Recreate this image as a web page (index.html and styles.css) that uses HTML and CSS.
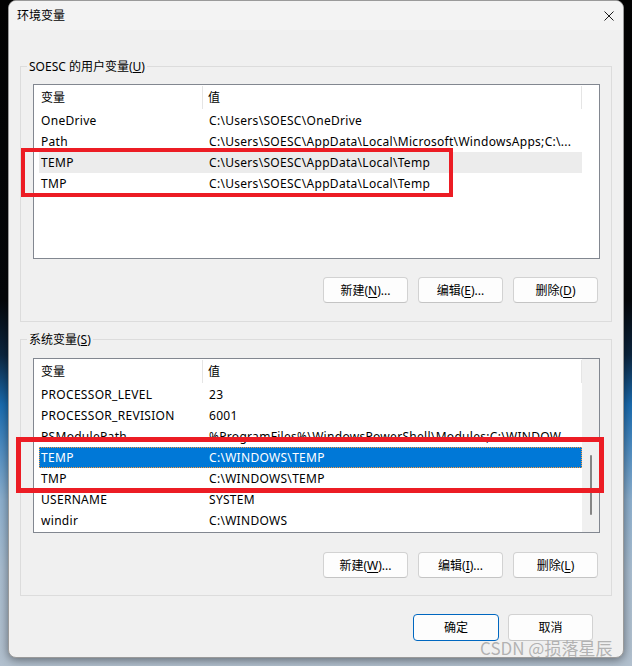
FILE: index.html
```html
<!DOCTYPE html>
<html lang="zh-CN">
<head>
<meta charset="utf-8">
<title>环境变量</title>
<link rel="stylesheet" href="styles.css">
</head>
<body>
<div class="window">
  <div class="titlebar">
    <span class="title">环境变量</span>
    <svg class="close" width="10" height="10" viewBox="0 0 10 10"><path d="M0.5 0.5L9.5 9.5M9.5 0.5L0.5 9.5" stroke="#1b1b1b" stroke-width="1"/></svg>
  </div>
  <div class="content">
    <fieldset class="group">
      <legend>SOESC 的用户变量(<u>U</u>)</legend>
      <div class="list">
        <div class="list-main">
          <div class="list-head"><div class="hcell c1">变量</div><div class="hcell c2">值</div></div>
          <div class="row"><span class="cell c1">OneDrive</span><span class="cell c2">C:\Users\SOESC\OneDrive</span></div>
          <div class="row"><span class="cell c1">Path</span><span class="cell c2">C:\Users\SOESC\AppData\Local\Microsoft\WindowsApps;C:\...</span></div>
          <div class="row hover"><span class="cell c1">TEMP</span><span class="cell c2">C:\Users\SOESC\AppData\Local\Temp</span></div>
          <div class="row"><span class="cell c1">TMP</span><span class="cell c2">C:\Users\SOESC\AppData\Local\Temp</span></div>
        </div>
      </div>
      <div class="buttons">
        <button class="btn">新建(<u>N</u>)...</button>
        <button class="btn">编辑(<u>E</u>)...</button>
        <button class="btn">删除(<u>D</u>)</button>
      </div>
    </fieldset>

    <fieldset class="group group-sys">
      <legend>系统变量(<u>S</u>)</legend>
      <div class="list">
        <div class="list-main">
          <div class="list-head"><div class="hcell c1">变量</div><div class="hcell c2">值</div></div>
          <div class="row"><span class="cell c1">PROCESSOR_LEVEL</span><span class="cell c2">23</span></div>
          <div class="row"><span class="cell c1">PROCESSOR_REVISION</span><span class="cell c2">6001</span></div>
          <div class="row"><span class="cell c1">PSModulePath</span><span class="cell c2">%ProgramFiles%\WindowsPowerShell\Modules;C:\WINDOW...</span></div>
          <div class="row selected"><span class="cell c1">TEMP</span><span class="cell c2">C:\WINDOWS\TEMP</span></div>
          <div class="row"><span class="cell c1">TMP</span><span class="cell c2">C:\WINDOWS\TEMP</span></div>
          <div class="row"><span class="cell c1">USERNAME</span><span class="cell c2">SYSTEM</span></div>
          <div class="row"><span class="cell c1">windir</span><span class="cell c2">C:\WINDOWS</span></div>
        </div>
        <div class="scrollbar"><div class="thumb"></div></div>
      </div>
      <div class="buttons">
        <button class="btn">新建(<u>W</u>)...</button>
        <button class="btn">编辑(<u>I</u>)...</button>
        <button class="btn">删除(<u>L</u>)</button>
      </div>
    </fieldset>

    <div class="dialog-buttons">
      <button class="btn btn-default">确定</button>
      <button class="btn">取消</button>
    </div>
  </div>
</div>
<div class="mark mark-user"></div>
<div class="mark mark-sys"></div>
<div class="watermark">CSDN @损落星辰</div>
</body>
</html>
```
FILE: styles.css
```css
html, body {
  margin: 0;
  padding: 0;
}

body {
  width: 632px;
  height: 666px;
  overflow: hidden;
  position: relative;
  font-family: "Noto Sans", "Noto Sans CJK SC", sans-serif;
  font-size: 12px;
  line-height: 17px;
  color: #000;
  background: linear-gradient(to bottom,
    #030303 0px, #05070a 300px, #0c2640 355px, #1a6cb0 405px,
    #4a8ac0 445px, #8db0cf 500px, #a9bdd0 570px, #b2c0ce 666px);
}

.window {
  margin-left: 8px;
  width: 616px;
  height: 658px;
  box-sizing: border-box;
  border: 1px solid #9a9a9a;
  border-radius: 8px;
  background: #f0f0f0;
  overflow: hidden;
  box-shadow: 0 2px 10px rgba(0, 0, 0, 0.45);
  display: flex;
  flex-direction: column;
}

.titlebar {
  height: 29px;
  flex: none;
  background: #f3f3f3;
  display: flex;
  align-items: center;
  justify-content: space-between;
  padding: 0 9px 0 8px;
}

.title {
  font-size: 12px;
}

.close {
  display: block;
}

.content {
  padding: 28px 11px 0 11px;
  display: flex;
  flex-direction: column;
}

.group {
  margin: 0;
  border: 1px solid #dcdcdc;
  padding: 9px 11px 18px 12px;
  min-width: 0;
}

.group legend {
  padding: 0 2px;
  margin-left: -6px;
  line-height: 17px;
}

.group-sys {
  margin-top: 9px;
  padding-top: 10px;
  padding-bottom: 17px;
}

.list {
  height: 175px;
  box-sizing: border-box;
  border: 1px solid #828790;
  background: #fff;
  display: flex;
  overflow: hidden;
}

.list-main {
  flex: 1;
  min-width: 0;
}

.list-head {
  display: flex;
  height: 25px;
  box-sizing: border-box;
  padding: 1px 0;
}

.hcell {
  box-sizing: border-box;
  border-right: 1px solid #e5e5e5;
  display: flex;
  align-items: center;
}

.hcell.c1 {
  width: 169px;
  padding-left: 7px;
}

.hcell.c2 {
  width: 379px;
  padding-left: 5px;
}

.row {
  display: flex;
  height: 21px;
  align-items: center;
  margin-left: 5px;
  width: 543px;
  box-sizing: border-box;
  letter-spacing: 0.3px;
}

.cell {
  white-space: nowrap;
  overflow: hidden;
  box-sizing: border-box;
}

.cell.c1 {
  width: 163px;
  padding-left: 2px;
}

.cell.c2 {
  width: 380px;
  padding-left: 7px;
}

.row.hover {
  background: #ececec;
}

.row.selected {
  background: #0078d7;
  color: #fff;
  outline: 1px dotted #ff9a3c;
  outline-offset: -1px;
}

.scrollbar {
  width: 17px;
  flex: none;
  background: #f0f0f0;
  position: relative;
}

.thumb {
  position: absolute;
  left: 8px;
  top: 96px;
  width: 2px;
  height: 60px;
  border-radius: 1px;
  background: #858585;
}

.buttons {
  display: flex;
  justify-content: flex-end;
  gap: 10px;
  margin-top: 18px;
  margin-right: 2px;
}

.group-sys .buttons {
  margin-top: 19px;
}

.btn {
  font-family: "Noto Sans", "Noto Sans CJK SC", sans-serif;
  font-size: 12px;
  line-height: 17px;
  color: #000;
  width: 85px;
  height: 26px;
  padding: 0;
  background: #fdfdfd;
  border: 1px solid #d2d2d2;
  border-bottom-color: #c4c4c4;
  border-radius: 4px;
}

.btn u {
  text-underline-offset: 2px;
}

.dialog-buttons {
  display: flex;
  justify-content: flex-end;
  gap: 9px;
  margin-top: 18px;
  margin-right: 19px;
}

.dialog-buttons .btn {
  height: 27px;
}

.btn-default {
  width: 86px;
  border: 1px solid #0067c0;
}

.mark {
  position: absolute;
  box-sizing: border-box;
  border: 4px solid #ec1c24;
}

.mark-user {
  left: 21px;
  top: 148px;
  width: 432px;
  height: 49px;
}

.mark-sys {
  left: 16px;
  top: 437px;
  width: 588px;
  height: 56px;
  border-width: 5px;
}

.watermark {
  position: absolute;
  left: 480px;
  top: 638px;
  font-family: "Noto Sans CJK SC", sans-serif;
  font-size: 17px;
  line-height: 20px;
  color: rgba(150, 150, 150, 0.7);
  white-space: nowrap;
}
```
